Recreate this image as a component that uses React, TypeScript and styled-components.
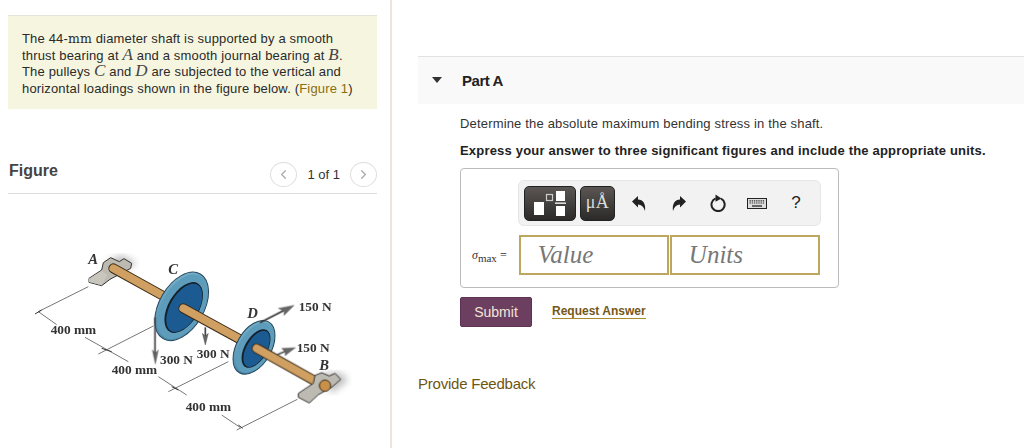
import React from "react";
import styled, { createGlobalStyle } from "styled-components";
import { ChevronLeft, ChevronRight } from "lucide-react";

const Global = createGlobalStyle`
  html, body { margin: 0; padding: 0; background: #fff; }
  body { width: 1024px; height: 448px; overflow: hidden; font-family: "Liberation Sans", Arial, sans-serif; color: #222; }
`;

const Page = styled.div`
  display: grid;
  grid-template-columns: 392px 1fr;
  width: 1024px;
  height: 448px;
  overflow: hidden;
`;
const LeftColumn = styled.section`
  box-sizing: border-box;
  height: 448px;
  padding: 15px 13px 0 8px;
  border-right: 2px solid #ece5df;
`;
const Intro = styled.div`
  box-sizing: border-box;
  height: 94px;
  padding: 15px 0 0 14px;
  background: #f6f6e0;
  border-top: 1px solid #e4e4d8;
  font-size: 13px;
  line-height: 16.6px;
  letter-spacing: 0.16px;
  white-space: nowrap;
  color: #2a2a2a;
`;
const MathVar = styled.i`
  font-family: "Liberation Serif", serif;
  font-size: 17px;
  line-height: 0;
  color: #444;
`;
const MathUnit = styled.span`
  font-family: "DejaVu Serif", serif;
  font-size: 12.5px;
  line-height: 0;
`;
const TextLink = styled.span`
  color: #8a6d10;
`;
const FigureHeader = styled.div`
  display: flex;
  align-items: center;
  justify-content: space-between;
  height: 51px;
  margin-top: 34px;
  padding: 11px 0 6px;
  box-sizing: border-box;
  border-bottom: 1px solid #ddd;
`;
const FigureTitle = styled.h2`
  margin: 0 0 0 1px;
  font-size: 16px;
  font-weight: 700;
  color: #444;
`;
const Pager = styled.div`
  display: flex;
  align-items: center;
  gap: 10px;
  margin-top: 7px;
  font-size: 13px;
  color: #333;
`;
const PagerButton = styled.span`
  display: flex;
  align-items: center;
  justify-content: center;
  box-sizing: border-box;
  width: 27px;
  height: 25px;
  border: 1px solid #ddd;
  border-radius: 50%;
  color: #aaa;
`;
const Diagram = styled.svg`
  display: block;
  width: 340px;
  height: 208px;
  margin: 46px 0 0 12px;
`;

const RightColumn = styled.section`
  padding: 56px 0 0 26px;
`;
const PartHeader = styled.div`
  display: flex;
  align-items: center;
  box-sizing: border-box;
  height: 48px;
  padding-left: 14px;
  background: #f9f9f9;
  border-top: 1px solid #e2e2e2;
`;
const Caret = styled.span`
  width: 0;
  height: 0;
  border-left: 5px solid transparent;
  border-right: 5px solid transparent;
  border-top: 6px solid #333;
  margin-top: -2px;
`;
const PartTitle = styled.h3`
  margin: 0 0 0 20px;
  font-size: 15px;
  font-weight: 700;
  letter-spacing: -0.03em;
  color: #222;
`;
const Body = styled.div`
  padding: 12px 0 0 42px;
`;
const Prompt = styled.p`
  margin: 0;
  font-size: 13px;
  line-height: 16px;
  letter-spacing: 0.17px;
  color: #333;
  white-space: nowrap;
`;
const Instruction = styled(Prompt)`
  margin-top: 11px;
  font-weight: 700;
  color: #222;
  letter-spacing: 0.19px;
`;
const AnswerBox = styled.div`
  box-sizing: border-box;
  width: 379px;
  height: 120px;
  margin-top: 9px;
  padding: 11px 17px 0 10px;
  border: 1px solid #bbb;
  border-radius: 4px;
`;
const Toolbar = styled.div`
  display: flex;
  align-items: center;
  box-sizing: border-box;
  width: 303px;
  height: 46px;
  margin-left: 47px;
  padding-left: 5px;
  background: #f2f2f2;
  border: 1px solid #e6e6e6;
  border-radius: 6px;
`;
const DarkButton = styled.span<{ $w: number }>`
  display: flex;
  align-items: center;
  justify-content: center;
  box-sizing: border-box;
  width: ${(p) => p.$w}px;
  height: 35px;
  margin-right: 4px;
  border-radius: 5px;
  border: 1px solid #222;
  background: linear-gradient(#5b5653, #2b2a29);
`;
const UnitsGlyph = styled.span`
  font-family: "Liberation Serif", serif;
  font-size: 18px;
  color: #ddd;
  letter-spacing: 0.02em;
  margin-top: -2px;
`;
const ToolIcon = styled.span<{ $ml: number }>`
  display: flex;
  align-items: center;
  justify-content: center;
  width: 20px;
  height: 20px;
  margin-left: ${(p) => p.$ml}px;
  color: #222;
  font-size: 17px;
`;
const EquationRow = styled.div`
  display: flex;
  align-items: center;
  margin-top: 9px;
`;
const EquationLabel = styled.span`
  width: 48px;
  padding-left: 1px;
  box-sizing: border-box;
  font-family: "Liberation Serif", serif;
  font-size: 12px;
  color: #333;
  white-space: nowrap;
`;
const Sub = styled.sub`
  font-size: 11px;
  line-height: 0;
`;
const InputBox = styled.span<{ $w: number }>`
  display: flex;
  align-items: center;
  box-sizing: border-box;
  width: ${(p) => p.$w}px;
  height: 40px;
  margin-right: 1px;
  padding-left: 17px;
  border: 2px solid #bda75f;
  font-family: "Liberation Serif", serif;
  font-style: italic;
  font-size: 25px;
  color: #777;
`;
const Actions = styled.div`
  display: flex;
  align-items: center;
  margin-top: 9px;
`;
const SubmitButton = styled.button`
  box-sizing: border-box;
  width: 72px;
  height: 30px;
  padding: 0;
  background: #6c3f61;
  border: 1px solid #5c3353;
  border-radius: 2px;
  color: #f2e6d8;
  font-family: "Liberation Sans", Arial, sans-serif;
  font-size: 14px;
`;
const RequestLink = styled.span`
  margin: -1px 0 0 20px;
  font-size: 12px;
  font-weight: 700;
  color: #76571a;
  border-bottom: 1px solid #a88930;
`;
const Feedback = styled.div`
  margin-top: 48px;
  font-size: 15px;
  letter-spacing: -0.015em;
  color: #6f5512;
`;

const dim = { stroke: "#777", strokeWidth: 3, fill: "none" };
const Label = styled.text`
  font-family: "Liberation Serif", serif;
  font-weight: 700;
  font-size: 40px;
  fill: #333;
`;
const PointLabel = styled.text`
  font-family: "Liberation Serif", serif;
  font-style: italic;
  font-weight: 700;
  font-size: 44px;
  fill: #333;
`;

function Pulley({ cx, cy, rx, ry, ix, iy }: { cx: number; cy: number; rx: number; ry: number; ix: number; iy: number }) {
  return (
    <g transform={`translate(${cx} ${cy}) rotate(30)`}>
      <ellipse rx={rx} ry={ry} fill="url(#rim)" stroke="#23465c" strokeWidth={3} />
      <ellipse cx={3} rx={rx - 5} ry={ry - 6} fill="#5d9dbb" />
      <ellipse cx={7} rx={ix + 4} ry={iy + 4} fill="#16202b" />
      <ellipse cx={9} rx={ix} ry={iy} fill="#1c5a92" />
    </g>
  );
}

function ShaftDiagram() {
  return (
    <Diagram viewBox="0 0 1020 624" aria-label="Shaft figure">
      <defs>
        <filter id="soft"><feGaussianBlur stdDeviation="11" /></filter>
        <filter id="slight"><feGaussianBlur stdDeviation="0.8" /></filter>
        <linearGradient id="rim" x1="0" y1="0" x2="1" y2="1">
          <stop offset="0" stopColor="#7fb6cf" />
          <stop offset="1" stopColor="#3b7c9d" />
        </linearGradient>
      </defs>
      <g filter="url(#slight)">
        <path d="M260 65 L305 45 L350 70 L300 100Z" fill="#888" opacity=".55" filter="url(#soft)" />
        <path d="M905 400 L960 398 L985 420 L935 460Z" fill="#888" opacity=".55" filter="url(#soft)" />

        <path d="M205 140 L55 215 L110 254 M195 292 L325 365 M235 342 L400 258 M415 410 L500 465 M445 455 L625 365 M605 525 L660 562 M650 570 L832 478" {...dim} />
        <path d="M45 222 L65 210 M245 325 L275 335 M455 440 L475 450 M655 555 L668 565" stroke="#333" strokeWidth={3} />

        <path d="M207 115 L245 90 L250 68 L272 53 L298 65 L312 56 L335 70 L332 85 L298 103 L270 118 L245 137 L207 127Z" fill="#bdbbb1" stroke="#333" strokeWidth={3} />
        <path d="M207 116 L245 92 L262 105 L245 136 L207 126Z" fill="#c9c7bd" />
        <path d="M280 85 L430 168" stroke="#3a2a18" strokeWidth={30} strokeLinecap="round" />
        <path d="M280 85 L430 168" stroke="#d0a062" strokeWidth={24} strokeLinecap="round" />

        <Pulley cx={485} cy={199} rx={67} ry={112} ix={42} iy={80} />
        <path d="M490 205 L660 298" stroke="#3a2a18" strokeWidth={30} strokeLinecap="round" />
        <path d="M490 205 L660 298" stroke="#d0a062" strokeWidth={24} strokeLinecap="round" />

        <path d="M556 262 V295" stroke="#444" strokeWidth={5} />
        <path d="M547 280 L556 315 L565 280 L556 288Z" fill="#666" stroke="#333" />

        <Pulley cx={702} cy={322} rx={52} ry={88} ix={30} iy={60} />
        <path d="M710 325 L885 423" stroke="#3a2a18" strokeWidth={30} strokeLinecap="round" />
        <path d="M710 325 L885 423" stroke="#d0a062" strokeWidth={24} strokeLinecap="round" />

        <path d="M835 460 L880 430 L885 406 L905 398 L928 408 L945 400 L962 418 L935 442 L895 464 L868 489 L835 472Z" fill="#bdbbb1" stroke="#333" strokeWidth={3} />
        <circle cx={915} cy={437} r={17} fill="#c9904a" stroke="#3a2a18" strokeWidth={3} />

        <path d="M405 232 V345" stroke="#444" strokeWidth={5} />
        <path d="M397 330 L406 372 L415 330 L406 340Z" fill="#666" stroke="#333" />
        <path d="M720 248 L790 212" stroke="#333" strokeWidth={5} />
        <path d="M775 205 L822 196 L792 226 L792 213Z" fill="#666" stroke="#333" />
        <path d="M770 345 L800 332" stroke="#555" strokeWidth={5} />
        <path d="M785 325 L826 323 L795 347 L796 335Z" fill="#666" stroke="#333" />
      </g>
      <PointLabel x="205" y="72">A</PointLabel>
      <PointLabel x="445" y="102">C</PointLabel>
      <PointLabel x="682" y="235">D</PointLabel>
      <PointLabel x="898" y="391">B</PointLabel>
      <Label x="836" y="213">150 N</Label>
      <Label x="830" y="337">150 N</Label>
      <Label x="420" y="371">300 N</Label>
      <Label x="530" y="354">300 N</Label>
      <Label x="92" y="281">400 mm</Label>
      <Label x="275" y="401">400 mm</Label>
      <Label x="497" y="514">400 mm</Label>
    </Diagram>
  );
}

function TemplateIcon() {
  return (
    <svg width="32" height="25" viewBox="0 0 32 25" fill="#fff">
      <rect x="0" y="11" width="10" height="13" />
      <rect x="12.5" y="3.5" width="6" height="6" fill="none" stroke="#ccc" strokeWidth="1.2" />
      <rect x="22" y="0" width="9" height="10" />
      <rect x="21" y="11.5" width="11" height="1.3" />
      <rect x="22" y="15" width="9" height="10" />
    </svg>
  );
}

function UndoIcon({ flip }: { flip?: boolean }) {
  return (
    <svg width="14" height="15" viewBox="0 0 14 15" fill="#222" style={flip ? { transform: "scaleX(-1)" } : undefined}>
      <path d="M0 5.5 L6 0 V3.4 C11 3.4 14 7.5 13 15 C11.8 10.8 9.5 8.6 6 8.4 V11.5Z" />
    </svg>
  );
}

function ResetIcon() {
  return (
    <svg width="17" height="18" viewBox="0 0 17 18" fill="none">
      <path d="M11 4.6 A6.6 6.6 0 1 1 5.6 4.4" stroke="#222" strokeWidth="2" />
      <path d="M5.5 0.5 L11.5 4.6 L5.5 7.8Z" fill="#222" />
    </svg>
  );
}

function KeyboardIcon() {
  return (
    <svg width="20" height="11" viewBox="0 0 20 11">
      <rect x="0.5" y="0.5" width="19" height="10" fill="#ddd" stroke="#222" />
      <path d="M2.5 2.8 H17.5 M2.5 5 H17.5" stroke="#333" strokeWidth="1.2" strokeDasharray="1.4 .8" />
      <path d="M5 8 H15" stroke="#333" strokeWidth="1.4" />
    </svg>
  );
}

export default function App() {
  return (
    <>
      <Global />
      <Page>
        <LeftColumn>
          <Intro>
            The 44-<MathUnit>mm</MathUnit> diameter shaft is supported by a smooth
            <br />
            thrust bearing at <MathVar>A</MathVar> and a smooth journal bearing at <MathVar>B</MathVar>.
            <br />
            The pulleys <MathVar>C</MathVar> and <MathVar>D</MathVar> are subjected to the vertical and
            <br />
            horizontal loadings shown in the figure below. (<TextLink>Figure 1</TextLink>)
          </Intro>
          <FigureHeader>
            <FigureTitle>Figure</FigureTitle>
            <Pager>
              <PagerButton><ChevronLeft size={15} /></PagerButton>
              1 of 1
              <PagerButton><ChevronRight size={15} /></PagerButton>
            </Pager>
          </FigureHeader>
          <ShaftDiagram />
        </LeftColumn>
        <RightColumn>
          <PartHeader>
            <Caret />
            <PartTitle>Part A</PartTitle>
          </PartHeader>
          <Body>
            <Prompt>Determine the absolute maximum bending stress in the shaft.</Prompt>
            <Instruction>Express your answer to three significant figures and include the appropriate units.</Instruction>
            <AnswerBox>
              <Toolbar>
                <DarkButton $w={52}><TemplateIcon /></DarkButton>
                <DarkButton $w={35}><UnitsGlyph>μÅ</UnitsGlyph></DarkButton>
                <ToolIcon $ml={10}><UndoIcon /></ToolIcon>
                <ToolIcon $ml={20}><UndoIcon flip /></ToolIcon>
                <ToolIcon $ml={19}><ResetIcon /></ToolIcon>
                <ToolIcon $ml={19}><KeyboardIcon /></ToolIcon>
                <ToolIcon $ml={19}>?</ToolIcon>
              </Toolbar>
              <EquationRow>
                <EquationLabel><i>σ</i><Sub>max</Sub> =</EquationLabel>
                <InputBox $w={151}>Value</InputBox>
                <InputBox $w={151}>Units</InputBox>
              </EquationRow>
            </AnswerBox>
            <Actions>
              <SubmitButton>Submit</SubmitButton>
              <RequestLink>Request Answer</RequestLink>
            </Actions>
          </Body>
          <Feedback>Provide Feedback</Feedback>
        </RightColumn>
      </Page>
    </>
  );
}
